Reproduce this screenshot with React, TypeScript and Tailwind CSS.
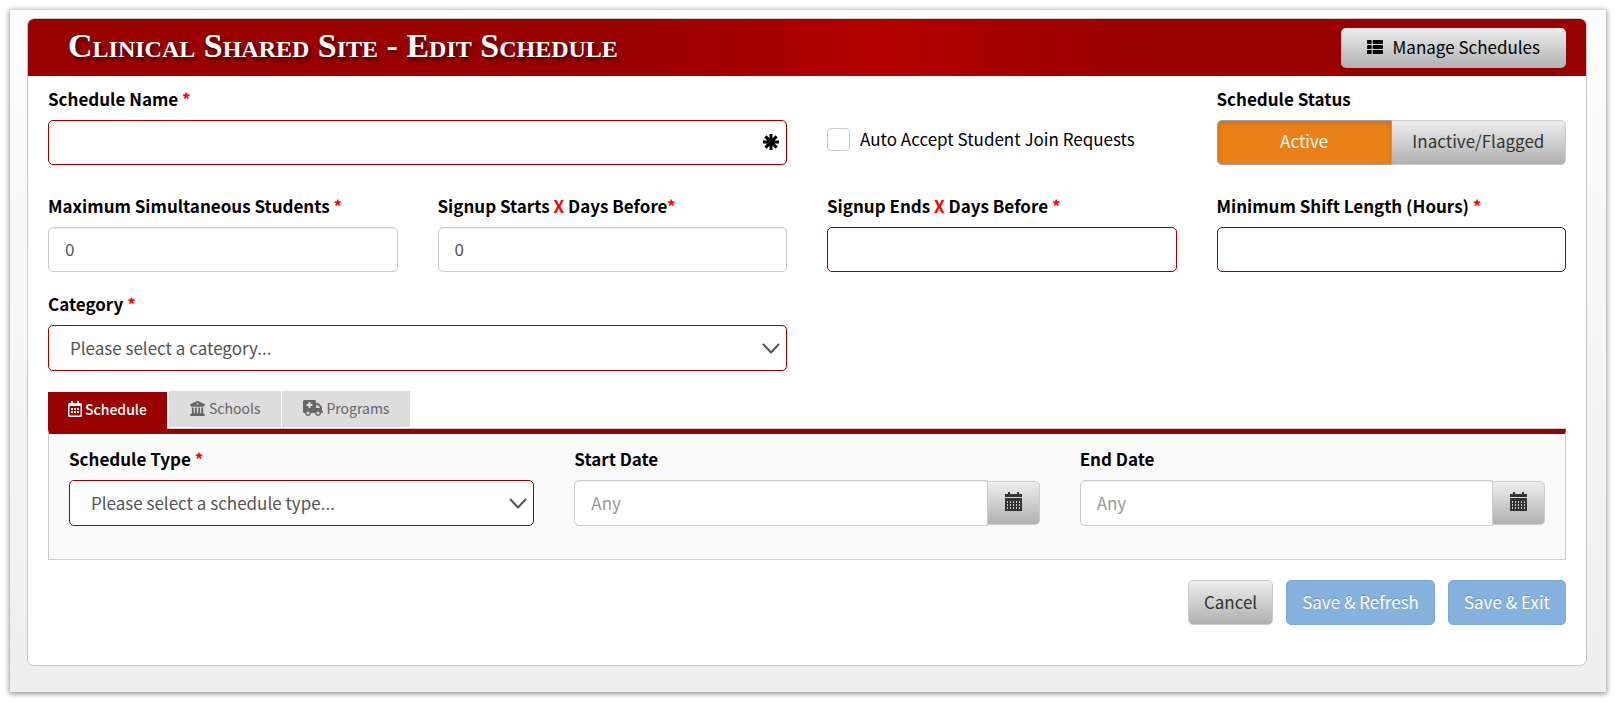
import { useState } from "react";
import type { ReactNode } from "react";
import { FaThList } from "react-icons/fa";
import { FaBuildingColumns, FaTruckMedical } from "react-icons/fa6";

const inputBase =
  "h-[45px] w-full rounded-[5px] border bg-white px-4 pb-[2px] text-[17px] text-[#555] shadow-[inset_0_1px_1px_rgba(0,0,0,0.075)] outline-none placeholder:text-[#999]";
const selectBase =
  "h-[46px] w-full appearance-none rounded-[5px] border border-[#990000] bg-white px-[21px] text-[17px] text-[#555] outline-none";
const grayButton =
  "border border-[#ccc] bg-linear-to-b from-[#eee] to-[#b0b0b0] text-[#333]";
const blueButton =
  "h-[45px] rounded-[5px] border border-[#79aad5] bg-[#84b2dc] px-[15px] pb-[2px] text-[17px] text-white [text-shadow:0_-1px_0_rgba(0,0,0,0.2)]";

const Required = () => <span className="text-[#ff0000]">*</span>;

type FieldProps = {
  id: string;
  label: ReactNode;
  className?: string;
  children: ReactNode;
};

const Field = ({ id, label, className, children }: FieldProps) => (
  <div className={className}>
    <label htmlFor={id} className="mb-[9px] block text-[17px] leading-6 font-bold">
      {label}
    </label>
    {children}
  </div>
);

const Chevron = () => (
  <svg
    viewBox="0 0 18 12"
    className="pointer-events-none absolute top-[18px] right-[7px] h-3 w-[18px]"
    fill="none"
    stroke="#555"
    strokeWidth="2"
    strokeLinecap="round"
    strokeLinejoin="round"
  >
    <path d="M1.5 1.5 9 9.5l7.5-8" />
  </svg>
);

const AsteriskIcon = () => (
  <svg
    viewBox="0 0 16 16"
    className="pointer-events-none absolute top-[14px] right-2 h-4 w-4"
    stroke="#000"
    strokeWidth="3"
  >
    <path d="M8 0v16M0 8h16M2.4 2.4l11.2 11.2M13.6 2.4 2.4 13.6" />
  </svg>
);

const TabCalendarIcon = () => (
  <svg viewBox="0 0 14 16" className="h-4 w-[14px]" fill="currentColor">
    <path
      fillRule="evenodd"
      d="M3 0h2v2h4V0h2v2h1.500a1.500 1.500 0 0 1 1.500 1.500v11a1.500 1.500 0 0 1-1.500 1.500h-11A1.500 1.500 0 0 1 0 14.500v-11A1.500 1.500 0 0 1 1.500 2H3zM1.500 5v9.500h11V5z"
    />
    <path d="M3 7h2v2H3zM6 7h2v2H6zM9 7h2v2H9zM3 10h2v2H3zM6 10h2v2H6zM9 10h2v2H9z" />
  </svg>
);

const CalendarIcon = () => (
  <svg viewBox="0 0 17 19" className="h-[19px] w-[17px]" fill="#333">
    <path d="M3 0h2v2h7V0h2v2h3v3H0V2h3z" />
    <path
      fillRule="evenodd"
      d="M0 6h17v13H0zM2 9v2h1V9zM5 9v2h1V9zM8 9v2h1V9zM11 9v2h1V9zM14 9v2h1V9zM2 12v2h1v-2zM5 12v2h1v-2zM8 12v2h1v-2zM11 12v2h1v-2zM14 12v2h1v-2zM2 15v2h1v-2zM5 15v2h1v-2zM8 15v2h1v-2zM11 15v2h1v-2zM14 15v2h1v-2z"
    />
  </svg>
);

const DateInput = ({ id, label }: { id: string; label: string }) => (
  <Field id={id} label={label}>
    <div className="flex items-center">
      <input
        id={id}
        placeholder="Any"
        className="h-[46px] min-w-0 flex-1 rounded-l-[5px] border border-[#ccc] bg-white px-4 pb-[2px] text-[17px] text-[#555] shadow-[inset_0_1px_1px_rgba(0,0,0,0.075)] outline-none placeholder:text-[#999]"
      />
      <button
        type="button"
        aria-label={`Pick ${label}`}
        className={`flex h-11 w-[52px] items-center justify-center rounded-r-[5px] border-l-0 pb-1 ${grayButton}`}
      >
        <CalendarIcon />
      </button>
    </div>
  </Field>
);

const App = () => {
  const [name, setName] = useState("");
  const [maxStudents, setMaxStudents] = useState("0");
  const [signupStarts, setSignupStarts] = useState("0");
  const [signupEnds, setSignupEnds] = useState("");
  const [shiftLength, setShiftLength] = useState("");
  const [autoAccept, setAutoAccept] = useState(false);

  return (
    <div className="p-[10px] font-['Noto_Sans_CJK_SC',sans-serif] text-black">
      <div className="bg-linear-to-b from-[#fdfdfd] to-[#eeeeee] pt-2 pr-[19px] pb-[26px] pl-[17px] shadow-[0_1px_5px_1px_rgba(0,0,0,0.4)]">
        <div className="overflow-hidden rounded-[7px] border border-[#c6c6c6] bg-white">
          <header className="flex h-[57px] items-center justify-between bg-linear-to-r from-[#990000] from-38% via-[#b30000] via-55% to-[#990000] to-72% pr-5 pl-10">
            <h1 className="pb-1 font-['Liberation_Serif',serif] text-[34px] leading-8 font-bold text-white [font-variant:small-caps] [text-shadow:2px_3px_4px_rgba(0,0,0,0.6)]">
              Clinical Shared Site - Edit Schedule
            </h1>
            <button
              type="button"
              className="flex h-10 items-center gap-[10px] rounded-[5px] bg-linear-to-b from-[#eee] to-[#b0b0b0] px-[26px] pb-[2px] text-[17px] text-black"
            >
              <FaThList size={16} />
              Manage Schedules
            </button>
          </header>

          <form className="px-5 pt-[11px] pb-10">
            <div className="grid grid-cols-4 gap-x-10">
              <Field
                id="name"
                className="col-span-2"
                label={<>Schedule Name <Required /></>}
              >
                <div className="relative">
                  <input
                    id="name"
                    value={name}
                    onChange={(e) => setName(e.target.value)}
                    className={`${inputBase} border-[#990000]`}
                  />
                  <AsteriskIcon />
                </div>
              </Field>

              <label className="flex items-center gap-[10px] pt-[26px] text-[17px]">
                <input
                  type="checkbox"
                  checked={autoAccept}
                  onChange={(e) => setAutoAccept(e.target.checked)}
                  className="h-[23px] w-[23px] appearance-none rounded-[4px] border border-[#ccc] bg-white checked:bg-[#990000]"
                />
                Auto Accept Student Join Requests
              </label>

              <div>
                <p className="mb-[9px] text-[17px] leading-6 font-bold">
                  Schedule Status
                </p>
                <div className="flex h-[45px] text-[17px]">
                  <button
                    type="button"
                    className="flex-1 rounded-l-[5px] border border-[#a0a0a0] bg-[#ea8017] pb-1 text-white shadow-[inset_0_3px_5px_rgba(0,0,0,0.125)]"
                  >
                    Active
                  </button>
                  <button
                    type="button"
                    className={`flex-1 rounded-r-[5px] border-l-0 pb-1 ${grayButton}`}
                  >
                    Inactive/Flagged
                  </button>
                </div>
              </div>
            </div>

            <div className="mt-[29px] grid grid-cols-4 gap-x-10">
              <Field id="max" label={<>Maximum Simultaneous Students <Required /></>}>
                <input
                  id="max"
                  value={maxStudents}
                  onChange={(e) => setMaxStudents(e.target.value)}
                  className={`${inputBase} border-[#ccc]`}
                />
              </Field>
              <Field
                id="starts"
                label={
                  <>
                    Signup Starts <span className="text-[#ff0000]">X</span> Days Before
                    <Required />
                  </>
                }
              >
                <input
                  id="starts"
                  value={signupStarts}
                  onChange={(e) => setSignupStarts(e.target.value)}
                  className={`${inputBase} border-[#ccc]`}
                />
              </Field>
              <Field
                id="ends"
                label={
                  <>
                    Signup Ends <span className="text-[#ff0000]">X</span> Days Before{" "}
                    <Required />
                  </>
                }
              >
                <input
                  id="ends"
                  value={signupEnds}
                  onChange={(e) => setSignupEnds(e.target.value)}
                  className={`${inputBase} border-[#990000]`}
                />
              </Field>
              <Field id="shift" label={<>Minimum Shift Length (Hours) <Required /></>}>
                <input
                  id="shift"
                  value={shiftLength}
                  onChange={(e) => setShiftLength(e.target.value)}
                  className={`${inputBase} border-[#990000]`}
                />
              </Field>
            </div>

            <div className="mt-5 grid grid-cols-2 gap-x-10">
              <Field id="category" label={<>Category <Required /></>}>
                <div className="relative">
                  <select id="category" className={selectBase}>
                    <option>Please select a category...</option>
                  </select>
                  <Chevron />
                </div>
              </Field>
            </div>

            <div className="mt-5 flex h-[38px] items-start border-b border-[#ccc] text-sm text-[#666]">
              <button
                type="button"
                className="mt-px mr-[2px] flex h-[37px] items-center gap-[3px] bg-[#990000] px-5 pb-[3px] font-medium text-white"
              >
                <TabCalendarIcon />
                Schedule
              </button>
              <button
                type="button"
                className="mr-px flex h-9 items-center gap-1 bg-[#ddd] px-[21px] pb-[2px]"
              >
                <FaBuildingColumns size={15} />
                Schools
              </button>
              <button
                type="button"
                className="flex h-9 items-center gap-[3px] bg-[#ddd] px-[21px] pb-[2px]"
              >
                <FaTruckMedical size={20} />
                Programs
              </button>
            </div>
            <div className="border border-t-[5px] border-[#ccc] border-t-[#990000] bg-[#fafafa] px-5 pt-[13px] pb-[33px]">
              <div className="grid grid-cols-3 gap-x-10">
                <Field id="type" label={<>Schedule Type <Required /></>}>
                  <div className="relative">
                    <select id="type" className={selectBase}>
                      <option>Please select a schedule type...</option>
                    </select>
                    <Chevron />
                  </div>
                </Field>
                <DateInput id="start" label="Start Date" />
                <DateInput id="end" label="End Date" />
              </div>
            </div>

            <div className="mt-5 flex justify-end gap-[13px]">
              <button
                type="button"
                className={`h-[45px] rounded-[5px] px-[15px] pb-[2px] text-[17px] ${grayButton}`}
              >
                Cancel
              </button>
              <button type="button" className={blueButton}>
                Save &amp; Refresh
              </button>
              <button type="button" className={blueButton}>
                Save &amp; Exit
              </button>
            </div>
          </form>
        </div>
      </div>
    </div>
  );
};

export default App;
